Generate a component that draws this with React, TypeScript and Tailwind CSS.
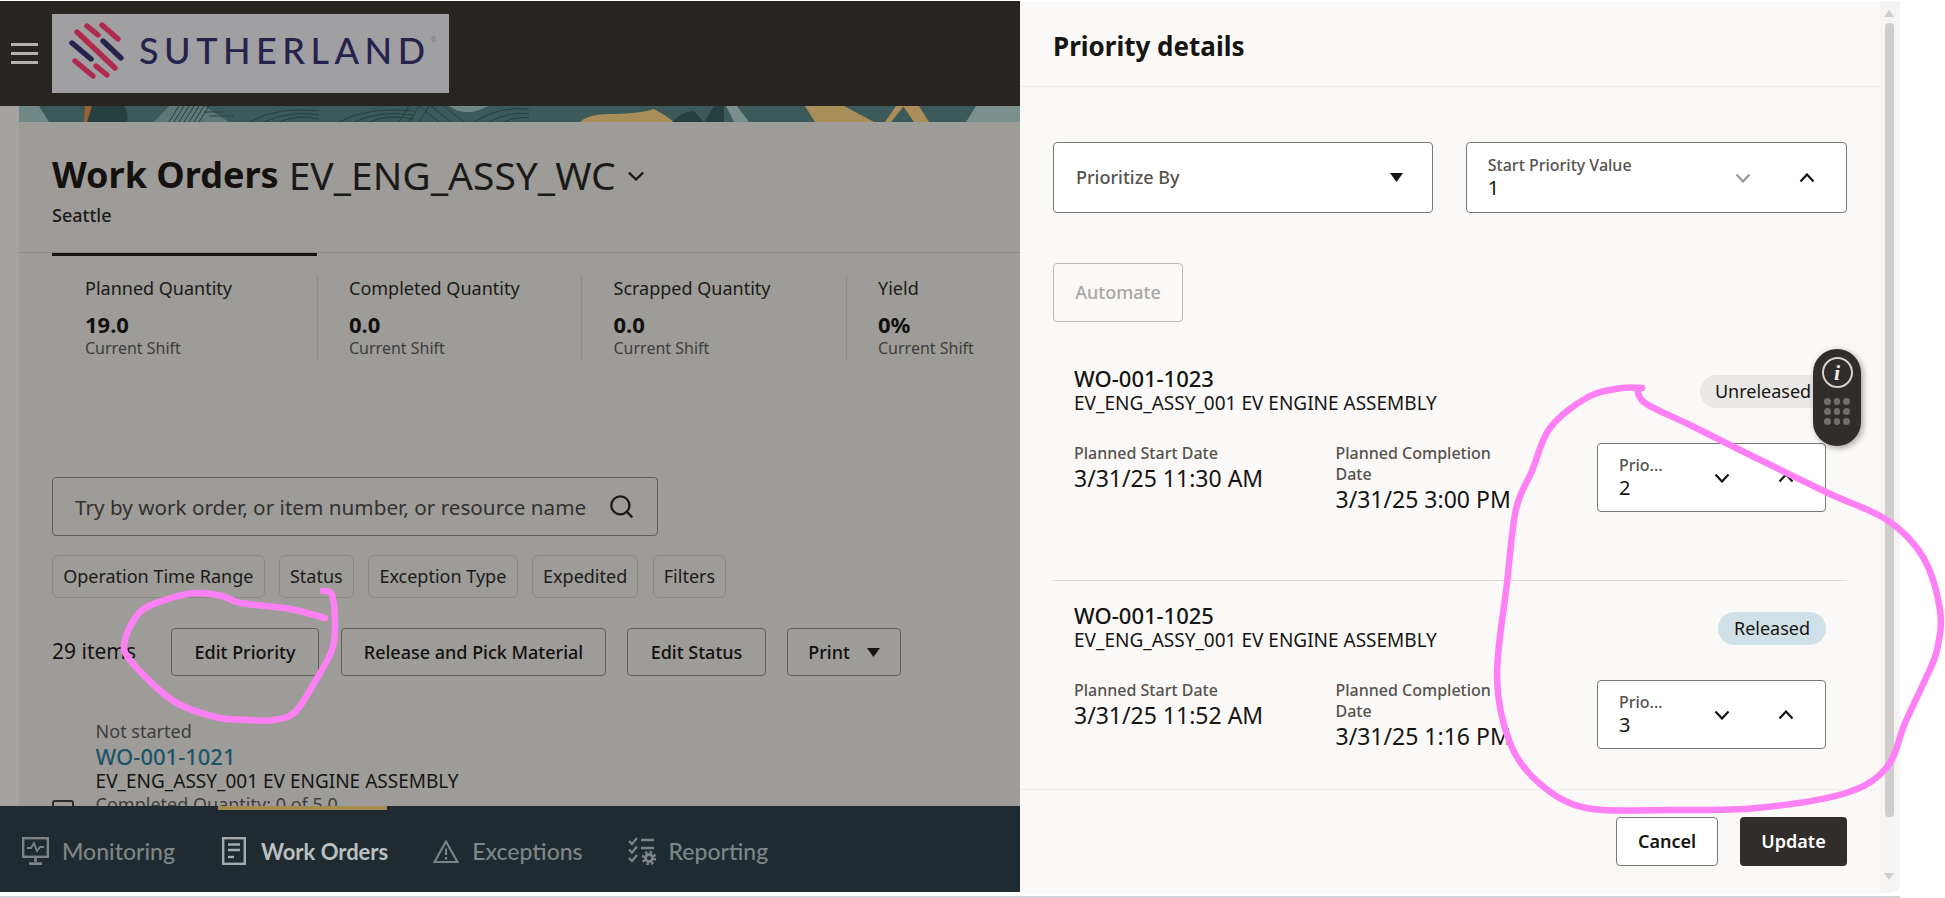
import React from "react";
import { Search } from "lucide-react";

const Chev = ({ up, color = "#161513", className = "" }: { up?: boolean; color?: string; className?: string }) => (
  <svg width="16" height="10" viewBox="0 0 16 10" fill="none" className={className}>
    <path d={up ? "M1.5 8.5 L8 1.5 L14.5 8.5" : "M1.5 1.5 L8 8.5 L14.5 1.5"} stroke={color} strokeWidth="2.2" />
  </svg>
);

const Caret = ({ color = "#161513" }: { color?: string }) => (
  <svg width="13" height="9" viewBox="0 0 13 9"><path d="M0 0 H13 L6.5 9 Z" fill={color} /></svg>
);

function smooth(pts: number[][]) {
  let d = `M${pts[0][0]} ${pts[0][1]}`;
  for (let i = 0; i < pts.length - 1; i++) {
    const p0 = pts[Math.max(i - 1, 0)], p1 = pts[i], p2 = pts[i + 1], p3 = pts[Math.min(i + 2, pts.length - 1)];
    const c1 = [p1[0] + (p2[0] - p0[0]) / 6, p1[1] + (p2[1] - p0[1]) / 6];
    const c2 = [p2[0] - (p3[0] - p1[0]) / 6, p2[1] - (p3[1] - p1[1]) / 6];
    d += ` C${c1[0]} ${c1[1]} ${c2[0]} ${c2[1]} ${p2[0]} ${p2[1]}`;
  }
  return d;
}

const pink1 = [[325,618],[290,609],[241,603],[222,596],[195,593],[165,600],[140,612],[125,640],[130,660],[172,700],[215,717],[250,720],[273,720],[295,712],[316,680],[332,650],[335,625],[332,595],[323,591]];
const pink2 = [[1642,388],[1622,388],[1588,397],[1550,428],[1532,471],[1516,509],[1507,583],[1497,677],[1510,743],[1539,783],[1586,808],[1669,810],[1757,808],[1846,793],[1887,767],[1905,723],[1925,680],[1937,650],[1940,610],[1923,557],[1887,520],[1828,493],[1740,450],[1690,425],[1645,403],[1637,388]];

const Logo = () => (
  <div className="flex h-[79px] w-[397px] items-center bg-[#a0a0a2] pl-[17px]">
    <svg width="56" height="60" viewBox="69 20 56 60" fill="none" className="mb-[7px] shrink-0" strokeLinecap="round" strokeWidth="5.4">
      <g stroke="#b0294e">
        <path d="M102 25 L118 39" /><path d="M87 26 L98 35" /><path d="M77 32 L115 68" /><path d="M75 61 L93 76" /><path d="M96 66 L107 75" />
      </g>
      <g stroke="#25234c">
        <path d="M103 41 L121 58" /><path d="M72 43 L91 59" />
      </g>
    </svg>
    <span className="mb-[7px] ml-[14px] text-[36px] leading-none font-medium tracking-[5.5px] text-[#25234c] font-[Lato,sans-serif]">SUTHERLAND</span>
    <span className="mb-[26px] text-[7px] text-[#77767c]">®</span>
  </div>
);

const Banner = () => (
  <svg className="block h-[16px] w-full shrink-0" viewBox="0 0 1001 16" preserveAspectRatio="none">
    <rect width="1001" height="16" fill="#3c5a5a" />
    <path d="M0 0 H20 L30 16 H0 Z" fill="#6f8785" />
    <path d="M66 0 H80 L73 16 H65 Z" fill="#96603a" />
    <path d="M73 0 H105 Q110 8 108 16 H68 Z" fill="#26403f" />
    <path d="M135 16 L150 0 H185 L210 16 Z" fill="#5d7875" />
    <g stroke="#263f3e" strokeWidth="1" fill="none">
      <path d="M150 16 L160 0 M155 16 L165 0 M160 16 L170 0 M165 16 L175 0 M170 16 L180 0 M175 16 L185 0 M180 16 L190 0 M185 6 H205 M190 10 H215" />
      <path d="M230 16 Q260 0 300 5 M245 16 Q270 4 300 9 M260 16 Q280 8 300 13" />
      <path d="M320 16 Q350 0 395 5 M335 16 Q360 4 395 9 M350 16 Q370 8 395 13" />
      <path d="M390 0 L380 16 M400 0 L390 16 M410 0 L400 16 M420 16 L400 0 M432 16 L412 0 M445 16 L425 0" />
      <path d="M455 16 Q480 0 510 3 M470 16 Q490 5 510 8 M485 16 Q498 10 510 12" />
    </g>
    <path d="M430 0 Q445 10 460 4 Q470 0 470 0 Z" fill="#6f8785" />
    <path d="M561 16 Q570 8 590 8 Q620 8 635 3 Q645 8 655 16 Z" fill="#a98e5a" />
    <path d="M653 16 Q665 4 675 5 L685 16 Z" fill="#26403f" />
    <path d="M685 16 L695 0 H705 V16 Z" fill="#26403f" />
    <path d="M707 0 H718 L730 16 H715 Z" fill="#7b8f8c" />
    <path d="M786 0 H825 L855 16 H796 Z" fill="#a98e5a" />
    <path d="M866 16 L877 0 H885 L872 16 Z" fill="#a98e5a" />
    <path d="M884 0 H900 L910 16 H895 Z" fill="#a98e5a" />
    <path d="M947 16 L957 0 H1001 V16 Z" fill="#7b8f8c" />
  </svg>
);

const Metric = ({ label, value, w }: { label: string; value: string; w: string }) => (
  <div className={`h-[86px] pt-[1px] ${w}`}>
    <div className="text-[18px] leading-[24px] text-[#1c1a18]">{label}</div>
    <div className="mt-[11px] text-[22px] leading-[26px] font-bold text-[#12100e]">{value}</div>
    <div className="mt-[1px] text-[16px] leading-[20px] text-[#3f3d3b]">Current Shift</div>
  </div>
);

const Chip = ({ children, w }: { children: React.ReactNode; w: string }) => (
  <div className={`flex h-[43px] items-center justify-center rounded-[6px] border border-[#8b8a87] text-[18px] text-[#1c1a18] ${w}`}>{children}</div>
);

const Btn = ({ children, w }: { children: React.ReactNode; w: string }) => (
  <div className={`flex h-[48px] items-center justify-center rounded-[4px] border border-[#5f5e5c] text-[18px] font-medium text-[#12100e] ${w}`}>{children}</div>
);

const NavItem = ({ icon, label, active, gap = "" }: { icon: React.ReactNode; label: string; active?: boolean; gap?: string }) => (
  <div className={`flex items-center font-[Lato,sans-serif] ${active ? "gap-[15px] text-[22px] font-bold text-[#bcc0c1]" : "gap-[13px] text-[23px] font-medium text-[#7e8688]"} ${gap}`}>
    {icon}
    <span>{label}</span>
  </div>
);

const IconMonitor = () => (
  <svg width="27" height="28" viewBox="0 0 27 28" fill="none" stroke="#7e8486" strokeWidth="2.4">
    <rect x="1.2" y="1.2" width="24.6" height="18.6" />
    <path d="M5 11 H9 L12 6 L15 14 L18 10 H22" strokeWidth="1.8" />
    <path d="M13.5 20 V25 M7 26.6 H20" strokeWidth="2.6" />
  </svg>
);
const IconDoc = () => (
  <svg width="24" height="28" viewBox="0 0 24 28" fill="none" stroke="#a7aaaa">
    <rect x="1.2" y="1.2" width="21.6" height="25.6" strokeWidth="2.4" />
    <path d="M6 7.5 H18 M6 13 H18" strokeWidth="2.4" />
    <path d="M6 20 H12" strokeWidth="2.4" />
  </svg>
);
const IconWarn = () => (
  <svg width="26" height="24" viewBox="0 0 26 24" fill="none" stroke="#7e8486">
    <path d="M13 2.5 L24.5 23 H1.5 Z" strokeWidth="2.2" />
    <path d="M13 9.5 V16" strokeWidth="2.2" />
    <path d="M13 18 V20.5" strokeWidth="2.2" />
  </svg>
);
const IconReport = () => (
  <svg width="28" height="28" viewBox="0 0 28 28" fill="none" stroke="#7e8486">
    <path d="M1 4 L4 7 L9 1 M1 12.5 L4 15.5 L9 9.5 M1 21 L4 24 L9 18" strokeWidth="2.2" />
    <path d="M13 3 H26 M13 11 H26" strokeWidth="2.6" />
    <circle cx="21" cy="21" r="3.6" strokeWidth="3" />
    <circle cx="21" cy="21" r="6" strokeWidth="2.6" strokeDasharray="2.4 2.3" />
  </svg>
);

const Stepper = ({ label, value, w, downColor }: { label: string; value: string; w: string; downColor?: string }) => (
  <div className={`flex items-center rounded-[4px] border border-[#7a7875] bg-white pl-[21px] ${w}`}>
    <div className="flex-1">
      <div className="text-[16px] leading-[20px] font-medium text-[#56524e]">{label}</div>
      <div className="mt-[1px] text-[20px] leading-[24px] text-[#161513]">{value}</div>
    </div>
    <Chev color={downColor} />
    <Chev up className="ml-[48px]" />
    <div className="w-[31px]" />
  </div>
);

const Order = ({ id, status, pill, start, end, value, pillW }: { id: string; status: string; pill: string; start: string; end: string; value: string; pillW: string }) => (
  <div className="px-[21px]">
    <div className="flex items-start justify-between">
      <div>
        <div className="text-[22px] leading-[26px] font-medium text-[#161513]">{id}</div>
        <div className="text-[19px] leading-[24px] text-[#161513]">EV_ENG_ASSY_001 EV ENGINE ASSEMBLY</div>
      </div>
      <div className={`mt-[10px] flex h-[32.5px] items-center justify-center rounded-full text-[18px] text-[#161513] ${pill} ${pillW}`}>{status}</div>
    </div>
    <div className="mt-[28px] flex items-start">
      <div className="w-[261.5px]">
        <div className="text-[16px] leading-[21px] font-medium text-[#56524e]">Planned Start Date</div>
        <div className="mt-[2px] text-[23px] leading-[24px] text-[#161513]">{start}</div>
      </div>
      <div className="w-[261.5px]">
        <div className="w-[165px] text-[16px] leading-[21px] font-medium text-[#56524e]">Planned Completion Date</div>
        <div className="mt-[2px] whitespace-nowrap text-[23px] leading-[24px] text-[#161513]">{end}</div>
      </div>
      <Stepper label="Prio..." value={value} w="h-[69px] w-[229px]" />
    </div>
  </div>
);

export default function App() {
  return (
    <div className="flex h-[898px] w-[1945px] flex-col overflow-hidden bg-white pt-px font-['Noto_Sans',sans-serif]">
      <div className="relative flex min-h-0 flex-1">
        {/* Left page */}
        <div className="flex h-full w-[1020px] shrink-0 flex-col">
          <header className="flex h-[105px] shrink-0 items-center bg-[#272421]">
            <div className="flex w-[52px] flex-col gap-[6px] pl-[11px]">
              <div className="h-[3px] w-[27px] bg-[#b3b2b2]" />
              <div className="h-[3px] w-[27px] bg-[#b3b2b2]" />
              <div className="h-[3px] w-[27px] bg-[#b3b2b2]" />
            </div>
            <Logo />
          </header>
          <div className="flex min-h-0 flex-1 overflow-hidden bg-[#a5a3a0]">
            <div className="w-[19px] shrink-0" />
            <div className="flex min-w-0 flex-1 flex-col">
              <Banner />
              <div className="min-h-0 flex-1 overflow-hidden bg-[#9d9c99]">
                <div className="pl-[33px] pt-[31px]">
                  <div className="flex items-center leading-[44px] text-[#1c1a18]">
                    <span className="text-[36px] font-bold text-[#14110f]">Work Orders</span>
                    <span className="ml-[10px] text-[39px]">EV_ENG_ASSY_WC</span>
                    <Chev className="ml-[12px] mt-[2px] scale-x-110" color="#1c1a18" />
                  </div>
                  <div className="mt-[6px] text-[18px] leading-[24px] font-medium text-[#1c1a18]">Seattle</div>
                </div>
                <div className="mt-[25px] border-b border-[#8b8a87]" />
                <div className="ml-[33px] h-[3px] w-[265px] bg-[#161412]" />
                <div className="mt-[19px] flex divide-x divide-[#8d8c89]">
                  <Metric w="w-[298.5px] pl-[66px]" label="Planned Quantity" value="19.0" />
                  <Metric w="w-[264.5px] pl-[31.5px]" label="Completed Quantity" value="0.0" />
                  <Metric w="w-[264.5px] pl-[31.5px]" label="Scrapped Quantity" value="0.0" />
                  <Metric w="flex-1 pl-[31.5px]" label="Yield" value="0%" />
                </div>
                <div className="pl-[33px]">
                  <div className="mt-[116px] flex h-[59px] w-[606px] items-center justify-between rounded-[4px] border border-[#5f5e5c] pl-[22px] pr-[22px]">
                    <span className="pt-[2px] text-[20.7px] text-[#33312f]">Try by work order, or item number, or resource name</span>
                    <Search size={27} strokeWidth={2} color="#1c1a18" />
                  </div>
                  <div className="mt-[19px] flex gap-[14.3px]">
                    <Chip w="w-[212.5px]">Operation Time Range</Chip>
                    <Chip w="w-[75px]">Status</Chip>
                    <Chip w="w-[149.5px]">Exception Type</Chip>
                    <Chip w="w-[106.5px]">Expedited</Chip>
                    <Chip w="w-[73.5px]">Filters</Chip>
                  </div>
                  <div className="mt-[30px] flex items-center">
                    <span className="w-[119px] text-[21px] text-[#161412]">29 items</span>
                    <Btn w="w-[148px]">Edit Priority</Btn>
                    <Btn w="ml-[22px] w-[265px]">Release and Pick Material</Btn>
                    <Btn w="ml-[21px] w-[139px]">Edit Status</Btn>
                    <Btn w="ml-[21px] w-[114px] gap-[17px]">Print <Caret /></Btn>
                  </div>
                  <div className="mt-[44px] flex items-start">
                    <div className="mt-[80px] h-[20px] w-[22px] rounded-[3px] border-2 border-[#2b2a28]" />
                    <div className="ml-[21.6px]">
                      <div className="text-[18px] leading-[22px] text-[#3f3d3b]">Not started</div>
                      <div className="text-[22px] leading-[28px] font-medium text-[#1c5468]">WO-001-1021</div>
                      <div className="text-[19px] leading-[23px] text-[#161412]">EV_ENG_ASSY_001 EV ENGINE ASSEMBLY</div>
                      <div className="text-[18px] leading-[22px] text-[#3f3d3b]">Completed Quantity: 0 of 5.0</div>
                    </div>
                  </div>
                </div>
              </div>
            </div>
          </div>
          <nav className="relative flex h-[86px] shrink-0 items-center bg-[#1f2b30] pl-[22px] pt-[4px]">
            <div className="absolute left-[218px] top-0 h-[4px] w-[169px] bg-[#a58d4f]" />
            <NavItem icon={<IconMonitor />} label="Monitoring" />
            <NavItem icon={<IconDoc />} label="Work Orders" active gap="ml-[47px]" />
            <NavItem icon={<IconWarn />} label="Exceptions" gap="ml-[45px]" />
            <NavItem icon={<IconReport />} label="Reporting" gap="ml-[45px]" />
          </nav>
          <div className="h-[4px] shrink-0 bg-white" />
        </div>

        {/* Right panel */}
        <div className="mb-[3px] flex w-[860px] shrink-0 flex-col bg-[#faf9f7]">
          <div className="flex h-[86px] shrink-0 items-center border-b border-[#eceae7] pl-[33px] pt-[6px] text-[26px] font-bold text-[#161513]">Priority details</div>
          <div className="min-h-0 flex-1 overflow-hidden px-[33px]">
            <div className="mt-[55px] flex gap-[32.5px]">
              <div className="flex h-[71px] w-[381px] items-center justify-between rounded-[4px] border border-[#7a7875] bg-white pl-[22px] pr-[29px]">
                <span className="text-[18px] font-medium text-[#56524e]">Prioritize By</span>
                <Caret />
              </div>
              <Stepper label="Start Priority Value" value="1" w="h-[71px] w-[382px]" downColor="#9a9895" />
            </div>
            <div className="mt-[50px] flex h-[59px] w-[130px] items-center justify-center rounded-[4px] border border-[#bdbbb8] text-[18px] font-medium text-[#a9a7a4]">Automate</div>
            <div className="mt-[43px]">
              <Order id="WO-001-1023" status="Unreleased" pill="bg-[#e9e8e6]" pillW="w-[126px]" start="3/31/25 11:30 AM" end="3/31/25 3:00 PM" value="2" />
            </div>
            <div className="mt-[68px] border-t border-[#dfdedb] pt-[21px]">
              <Order id="WO-001-1025" status="Released" pill="bg-[#cfe0e7]" pillW="w-[108px]" start="3/31/25 11:52 AM" end="3/31/25 1:16 PM" value="3" />
            </div>
          </div>
          <div className="flex h-[104px] shrink-0 justify-end gap-[22px] border-t border-[#eeece9] pr-[33px] pt-[27px]">
            <div className="flex h-[49px] w-[102px] items-center justify-center rounded-[4px] border border-[#7a7875] bg-white text-[18px] font-semibold text-[#161513]">Cancel</div>
            <div className="flex h-[49px] w-[107px] items-center justify-center rounded-[4px] bg-[#312d2a] text-[18px] font-semibold text-white">Update</div>
          </div>
        </div>

        {/* Scrollbar */}
        <div className="mb-[3px] flex w-[20px] shrink-0 rounded-br-[10px] bg-[#f5f4f3]">
          <div className="flex w-[15px] flex-col items-center pl-[3px] pt-[9px]">
            <div className="h-0 w-0 border-x-[5px] border-b-[7px] border-x-transparent border-b-[#cfcecc]" />
            <div className="mt-[6px] h-[794px] w-[9px] rounded-[4px] bg-[#cfcecc]" />
            <div className="mt-[56px] h-0 w-0 border-x-[5px] border-t-[7px] border-x-transparent border-t-[#cfcecc]" />
          </div>
        </div>

        {/* Floating help pill */}
        <div className="absolute left-[1813px] top-[348px] flex h-[97px] w-[48px] flex-col items-center rounded-full bg-[#312d2a] pt-[8px] shadow-[2px_2px_6px_rgba(0,0,0,0.35)]">
          <div className="flex h-[31px] w-[31px] items-center justify-center rounded-full border-2 border-[#d5d3d0] text-[22px] font-bold italic leading-none text-[#eeecea] font-['Liberation_Serif',serif]">i</div>
          <div className="mt-[10px] grid grid-cols-3 gap-x-[3px] gap-y-[3.5px]">
            {Array.from({ length: 9 }).map((_, i) => (
              <div key={i} className="h-[6.5px] w-[6.5px] rounded-full bg-[#716e6b]" />
            ))}
          </div>
        </div>

        {/* Hand-drawn annotation */}
        <svg className="pointer-events-none absolute left-0 top-[-1px]" width="1945" height="898" fill="none" stroke="#ff80f5" strokeWidth="6.5" strokeLinecap="round" strokeLinejoin="round">
          <path d={smooth(pink1)} />
          <path d={smooth(pink2)} />
        </svg>
      </div>
      <div className="h-[2px] w-[1900px] shrink-0 bg-[#d3d3d6]" />
    </div>
  );
}
